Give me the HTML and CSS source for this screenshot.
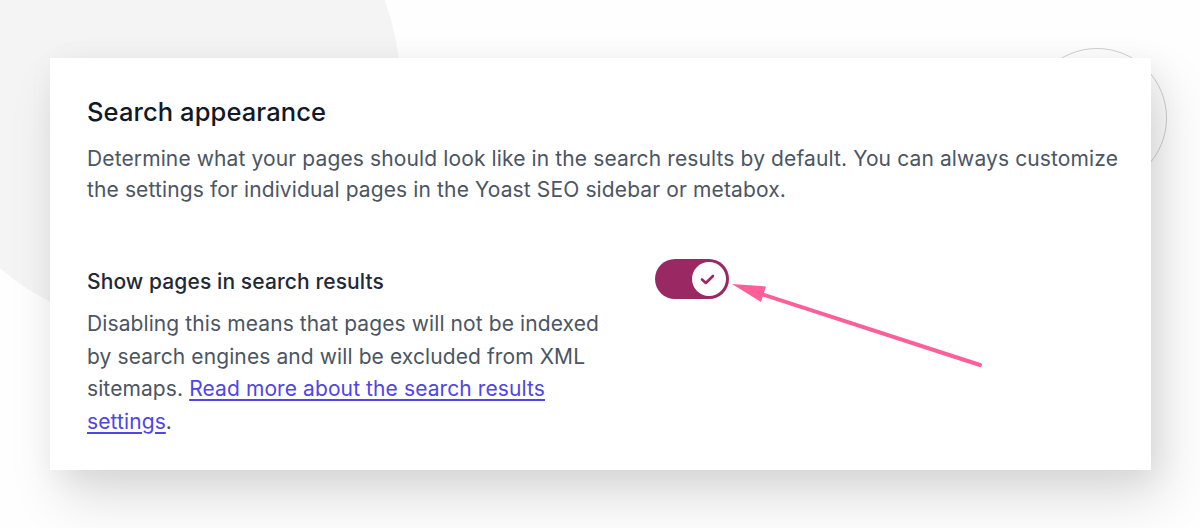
FILE: index.html
```html
<!DOCTYPE html>
<html lang="en">
<head>
<meta charset="utf-8">
<title>Search appearance</title>
<link rel="stylesheet" href="styles.css">
</head>
<body>
<div class="stage">
  <div class="blob"></div>
  <div class="ring"></div>
  <section class="card">
    <h2 class="title">Search appearance</h2>
    <p class="intro">Determine what your pages should look like in the search results by default. You can always customize the settings for individual pages in the Yoast SEO sidebar or metabox.</p>
    <div class="setting">
      <div class="setting-text">
        <h3 class="label">Show pages in search results</h3>
        <p class="help">Disabling this means that pages will not be indexed by search engines and will be excluded from XML sitemaps. <a href="#" class="link">Read more about the search results settings</a>.</p>
      </div>
      <button class="toggle" type="button" aria-pressed="true">
        <span class="knob">
          <svg class="check" viewBox="0 0 34 34" width="34" height="34" aria-hidden="true">
            <path d="M10 17.5 L13.8 21 L21 14" fill="none" stroke="#9a2863" stroke-width="2.6" stroke-linecap="round" stroke-linejoin="round"/>
          </svg>
        </span>
      </button>
    </div>
  </section>
  <svg class="arrow" viewBox="0 0 1200 528" width="1200" height="528" aria-hidden="true">
    <line x1="980" y1="365" x2="752" y2="291" stroke="#fd5f9b" stroke-width="4" stroke-linecap="round"/>
    <polygon points="732,284 766,286.5 761,302" fill="#fd5f9b"/>
  </svg>
</div>
</body>
</html>
```
FILE: styles.css
```css
* { box-sizing: border-box; }
html, body { margin: 0; padding: 0; }
body {
  width: 1200px;
  height: 528px;
  overflow: hidden;
  background: #ffffff;
  font-family: Inter, "Liberation Sans", sans-serif;
}
.stage {
  position: relative;
  width: 1200px;
  height: 528px;
  overflow: hidden;
  padding: 58px 0 0 50px;
  background: #fefefe;
}
.blob {
  position: absolute;
  left: -84px;
  top: -157px;
  width: 484px;
  height: 484px;
  border-radius: 50%;
  background: #f4f4f5;
}
.ring {
  position: absolute;
  left: 1027px;
  top: 48px;
  width: 140px;
  height: 140px;
  border-radius: 50%;
  border: 1px solid #cfcfcf;
}
.card {
  position: relative;
  width: 1101px;
  height: 412px;
  background: #ffffff;
  padding: 35px 30px 0 37px;
  box-shadow: 12px 28px 50px rgba(0, 0, 0, 0.13), 6px 6px 30px rgba(0, 0, 0, 0.06);
}
.title {
  margin: 0;
  font-size: 25.5px;
  line-height: 38px;
  font-weight: 500;
  color: #111827;
  letter-spacing: 0.1px;
}
.intro {
  margin: 12px 0 0 0;
  font-size: 21px;
  line-height: 31px;
  color: #4b5563;
  letter-spacing: 0.12px;
}
.setting {
  display: flex;
  align-items: flex-start;
  gap: 38px;
  margin-top: 61px;
}
.setting-text {
  width: 530px;
  flex: none;
}
.label {
  margin: 0 0 10px 0;
  font-size: 21px;
  line-height: 32px;
  font-weight: 500;
  color: #1f2937;
  letter-spacing: 0.1px;
}
.help {
  margin: 0;
  font-size: 21px;
  line-height: 32.5px;
  color: #4b5563;
  letter-spacing: 0.1px;
}
.link {
  color: #4f46e5;
  text-decoration: underline;
  text-underline-offset: 3px;
}
.toggle {
  flex: none;
  width: 74px;
  height: 40px;
  margin-top: -7px;
  padding: 3px;
  border: none;
  border-radius: 20px;
  background: #9a2863;
  display: flex;
  justify-content: flex-end;
  align-items: center;
}
.knob {
  width: 34px;
  height: 34px;
  border-radius: 50%;
  background: #ffffff;
  display: block;
}
.check { display: block; }
.arrow {
  position: absolute;
  left: 0;
  top: 0;
  pointer-events: none;
}
```
